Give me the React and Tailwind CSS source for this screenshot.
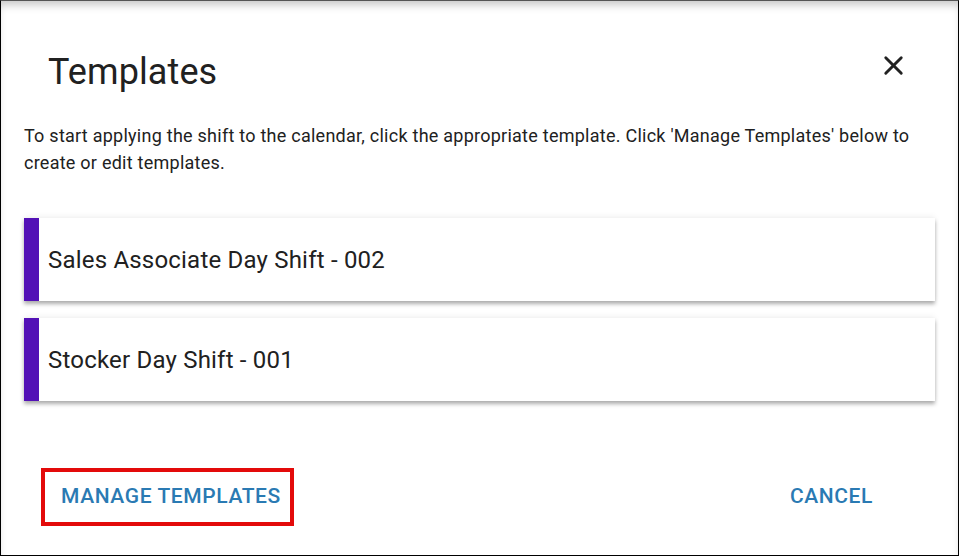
import React from 'react';
import { X } from 'lucide-react';

const templates = [
  'Sales Associate Day Shift - 002',
  'Stocker Day Shift - 001',
];

export default function App() {
  return (
    <div
      className="w-[959px] h-[556px] bg-white border border-black border-t-[#555] shadow-[inset_0_7px_9px_-3px_rgba(0,0,0,0.22)] flex flex-col px-[23px] text-[#212121]"
      style={{ fontFamily: 'Roboto, "Liberation Sans", sans-serif' }}
    >
      <div className="flex items-start justify-between pt-[50px] pr-[26px]">
        <h2 className="ml-[24px] text-[36px] leading-[42px] font-normal tracking-[0.1px]">Templates</h2>
        <button className="-mt-[1px] text-[#222]">
          <X className="w-[31px] h-[31px]" strokeWidth={2.2} />
        </button>
      </div>

      <p className="mt-[29px] text-[18px] leading-[27px] tracking-[0.25px]">
        To start applying the shift to the calendar, click the appropriate template. Click 'Manage Templates' below to
        create or edit templates.
      </p>

      <div className="mt-[42px] flex flex-col gap-[17px]">
        {templates.map((t) => (
          <div
            key={t}
            className="h-[83px] flex items-stretch bg-white shadow-[0_3px_4px_rgba(0,0,0,0.32),0_-2px_6px_rgba(0,0,0,0.05)]"
          >
            <div className="w-[15px] bg-[#5311b6]" />
            <div className="flex items-center pl-[9px] text-[24px] tracking-[0.2px]">{t}</div>
          </div>
        ))}
      </div>

      <div className="mt-[67px] flex items-center justify-between">
        <button className="ml-[17px] h-[58px] pl-4 pr-[9px] border-4 border-[#e30a0a] text-[21px] font-medium uppercase tracking-[0.6px] text-[#2a7ab3]">
          Manage Templates
        </button>
        <button className="mr-[46px] h-[58px] px-4 text-[21px] font-medium uppercase tracking-[0.6px] text-[#2a7ab3]">
          Cancel
        </button>
      </div>
    </div>
  );
}
